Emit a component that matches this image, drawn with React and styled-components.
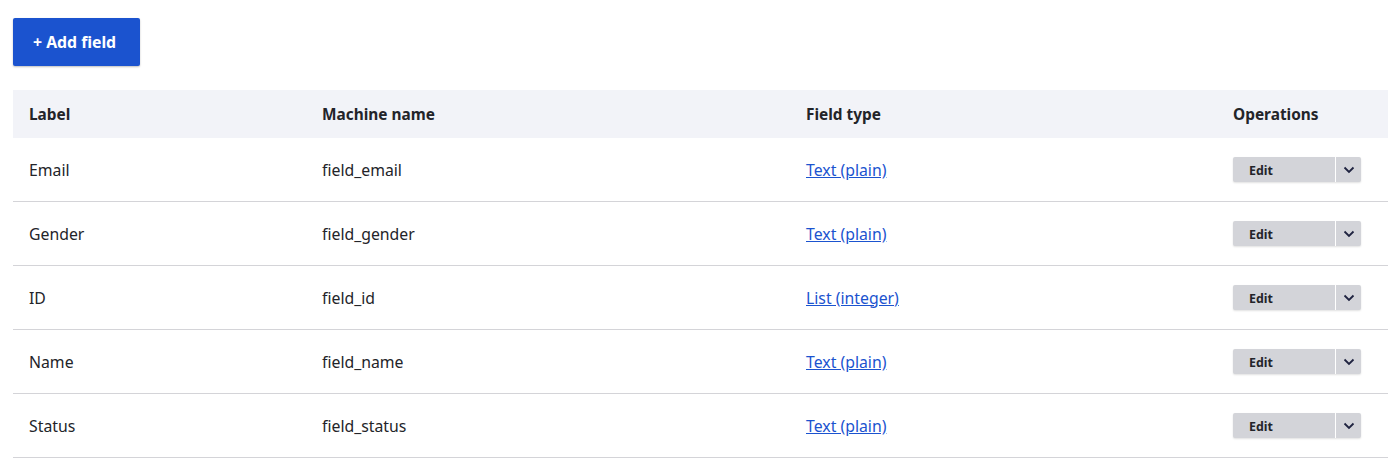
import React from 'react';
import styled, { createGlobalStyle } from 'styled-components';

const GlobalStyle = createGlobalStyle`
  html, body {
    margin: 0;
    padding: 0;
    background: #fff;
  }
  body {
    font-family: "Noto Sans", "Open Sans", sans-serif;
    color: #232429;
  }
`;

const fields = [
  { label: 'Email', machine: 'field_email', type: 'Text (plain)' },
  { label: 'Gender', machine: 'field_gender', type: 'Text (plain)' },
  { label: 'ID', machine: 'field_id', type: 'List (integer)' },
  { label: 'Name', machine: 'field_name', type: 'Text (plain)' },
  { label: 'Status', machine: 'field_status', type: 'Text (plain)' },
];

const Chevron = () => (
  <svg width="12" height="8" viewBox="0 0 12 8" fill="none">
    <path d="M1.5 1.5 6 6l4.5-4.5" stroke="#1f2340" strokeWidth="1.8" />
  </svg>
);

const App = () => {
  return (
    <Page>
      <GlobalStyle />
      <AddButton>+ Add field</AddButton>
      <Table>
        <colgroup>
          <col style={{ width: 293 }} />
          <col style={{ width: 484 }} />
          <col style={{ width: 427 }} />
          <col />
        </colgroup>
        <thead>
          <tr>
            <Th>Label</Th>
            <Th>Machine name</Th>
            <Th>Field type</Th>
            <Th>Operations</Th>
          </tr>
        </thead>
        <tbody>
          {fields.map((f) => (
            <Row key={f.machine}>
              <Td>{f.label}</Td>
              <Td>{f.machine}</Td>
              <Td><TypeLink href="#">{f.type}</TypeLink></Td>
              <Td>
                <Dropbutton>
                  <EditButton>Edit</EditButton>
                  <Toggle><Chevron /></Toggle>
                </Dropbutton>
              </Td>
            </Row>
          ))}
        </tbody>
      </Table>
    </Page>
  );
};

const Page = styled.div`
  padding: 18px 0 0 13px;
`;

const AddButton = styled.button`
  display: block;
  width: 127px;
  height: 48px;
  padding: 0 0 0 20px;
  border: 0;
  border-radius: 2px;
  background: #1b53cf;
  color: #fff;
  text-align: left;
  font-family: inherit;
  font-size: 15.8px;
  font-weight: 700;
  box-shadow: 0 1px 2px rgba(0, 0, 0, 0.25);
  cursor: pointer;
`;

const Table = styled.table`
  width: 100%;
  margin-top: 24px;
  border-collapse: collapse;
  table-layout: fixed;
  font-size: 15.8px;
`;

const Th = styled.th`
  height: 48px;
  padding: 0 16px;
  background: #f2f3f8;
  text-align: left;
  font-size: 15.4px;
  font-weight: 700;
`;

const Row = styled.tr`
  border-bottom: 1px solid #d4d4d8;
`;

const Td = styled.td`
  height: 63px;
  padding: 0 16px;
`;

const TypeLink = styled.a`
  color: #1b53cf;
  text-decoration: underline;
`;

const Dropbutton = styled.div`
  display: inline-flex;
  width: 128px;
  height: 25px;
  border-radius: 2px;
  background: #d3d4d9;
  box-shadow: 0 1px 2px rgba(0, 0, 0, 0.12);
  overflow: hidden;
`;

const EditButton = styled.button`
  flex: 1;
  border: 0;
  border-right: 1px solid #fff;
  background: transparent;
  padding: 1px 0 0 16px;
  text-align: left;
  font-family: inherit;
  font-size: 12.4px;
  font-weight: 700;
  color: #232429;
`;

const Toggle = styled.button`
  display: flex;
  align-items: center;
  justify-content: center;
  width: 25px;
  border: 0;
  background: transparent;
  padding: 0;
`;

export default App;
